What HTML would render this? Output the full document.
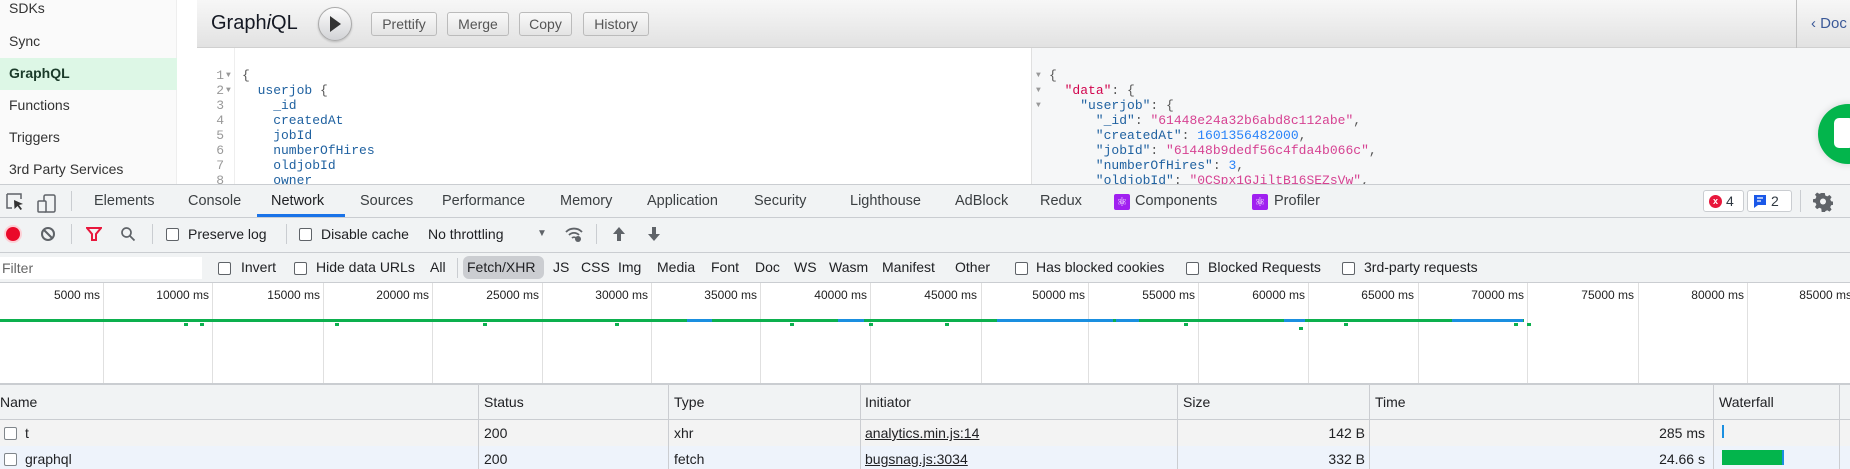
<!DOCTYPE html>
<html><head><meta charset="utf-8"><style>
*{box-sizing:border-box;margin:0;padding:0}
body{width:1850px;height:469px;overflow:hidden;position:relative;background:#fff;font-family:"Liberation Sans","DejaVu Sans",sans-serif;color:#303942}
.a{position:absolute;white-space:nowrap}
.sb{font-size:14px;color:#333;left:9px}
.mono{font-family:"Liberation Mono","DejaVu Sans Mono",monospace;font-size:13px}
.btn{position:absolute;top:12px;height:24px;border:1px solid #bbb;border-radius:3px;background:linear-gradient(#f9f9f9,#e4e4e4);font-size:14px;color:#555;text-align:center;line-height:22px}
.tab{position:absolute;top:193px;font-size:14.5px;color:#3c4043}
.t2{font-size:14px;color:#202124;top:259px}
.cb{position:absolute;width:13px;height:13px;border:1px solid #5f6368;border-radius:2px;background:#fff}
.lbl{position:absolute;top:288px;font-size:12px;color:#222;text-align:right;width:100px}
.gl{position:absolute;top:283px;width:1px;height:101px;background:#e0e0e0}
.sq{position:absolute;width:4px;height:3px;background:#0cb04e}
.col{position:absolute;top:384px;width:1px;height:85px;background:#cbcdd1}
.th{position:absolute;top:394px;font-size:14px;color:#202124}
.td{position:absolute;font-size:14px;color:#202124}
</style></head><body>
<div class="a" style="left:0;top:0;width:177px;height:184px;background:#fafafa;border-right:1px solid #eee"></div>
<div class="a" style="left:0;top:58px;width:177px;height:32px;background:#ddf7e6"></div>
<div class="a sb" style="top:0px">SDKs</div>
<div class="a sb" style="top:33px">Sync</div>
<div class="a sb" style="top:65px;font-weight:bold;color:#1b3b2a">GraphQL</div>
<div class="a sb" style="top:97px">Functions</div>
<div class="a sb" style="top:129px">Triggers</div>
<div class="a sb" style="top:161px">3rd Party Services</div>
<div class="a" style="left:197px;top:0;width:1653px;height:48px;background:linear-gradient(#f7f7f7,#e2e2e2);border-bottom:1px solid #d0d0d0"></div>
<div class="a" style="left:211px;top:12px;font-size:20px;color:#141823">Graph<i>i</i>QL</div>
<div class="a" style="left:318px;top:7px;width:34px;height:34px;border-radius:50%;border:1px solid #aaa;background:linear-gradient(#fdfdfd,#d2d3d6);box-shadow:0 1px 2px rgba(0,0,0,.2)"></div>
<svg class="a" style="left:330px;top:16px" width="12" height="16"><path d="M0 0L11 8L0 16Z" fill="#333"/></svg>
<div class="btn" style="left:371px;width:66px">Prettify</div>
<div class="btn" style="left:447px;width:62px">Merge</div>
<div class="btn" style="left:519px;width:53px">Copy</div>
<div class="btn" style="left:583px;width:66px">History</div>
<div class="a" style="left:1796px;top:0;width:1px;height:48px;background:#c0c0c0"></div>
<div class="a" style="left:1811px;top:15px;font-size:15px;color:#3b5998">&#x2039; Doc</div>
<div class="a" style="left:234px;top:48px;width:1px;height:136px;background:#eee"></div>
<div class="a" style="left:1031px;top:48px;width:819px;height:136px;background:#f6f7f8;border-left:1px solid #e0e0e0"></div>
<div class="a mono" style="left:200px;top:68px;line-height:15px;color:#999;text-align:right;width:24px">1<br>2<br>3<br>4<br>5<br>6<br>7<br>8</div>
<div class="a mono" style="left:226px;top:68px;line-height:15px;color:#999;font-size:8px">▼<br>▼</div>
<div class="a mono" style="left:242px;top:68px;line-height:15px;color:#1f61a0;white-space:pre"><span style="color:#555">{</span>
  userjob <span style="color:#555">{</span>
    _id
    createdAt
    jobId
    numberOfHires
    oldjobId
    owner</div>
<div class="a mono" style="left:1036px;top:68px;line-height:15px;color:#999;font-size:8px">▼<br>▼<br>▼</div>
<div class="a mono" style="left:1049px;top:68px;line-height:15px;color:#1f61a0;white-space:pre;height:116px;overflow:hidden"><span style="color:#555">{</span>
  <span style="color:#d2054e">"data"</span><span style="color:#555">: {</span>
    "userjob"<span style="color:#555">: {</span>
      "_id"<span style="color:#555">: </span><span style="color:#d64292">"61448e24a32b6abd8c112abe"</span><span style="color:#555">,</span>
      "createdAt"<span style="color:#555">: </span><span style="color:#2882f9">1601356482000</span><span style="color:#555">,</span>
      "jobId"<span style="color:#555">: </span><span style="color:#d64292">"61448b9dedf56c4fda4b066c"</span><span style="color:#555">,</span>
      "numberOfHires"<span style="color:#555">: </span><span style="color:#2882f9">3</span><span style="color:#555">,</span>
      "oldjobId"<span style="color:#555">: </span><span style="color:#d64292">"0CSpx1GJiltB16SEZsVw"</span><span style="color:#555">,</span></div>
<div class="a" style="left:1818px;top:104px;width:60px;height:60px;border-radius:50%;background:#03b54c;box-shadow:0 0 8px rgba(0,0,0,.15)"></div>
<div class="a" style="left:1834px;top:118px;width:20px;height:30px;border-radius:5px;background:#fff"></div>
<div class="a" style="left:0;top:184px;width:1850px;height:285px;background:#f1f3f4;border-top:1px solid #cacdd1"></div>
<div class="a" style="left:0;top:217px;width:1850px;height:1px;background:#cacdd1"></div>
<div class="a" style="left:0;top:252px;width:1850px;height:1px;background:#cacdd1"></div>
<div class="a" style="left:0;top:282px;width:1850px;height:1px;background:#cacdd1"></div>
<svg class="a" style="left:5px;top:192px" width="56" height="22"><path d="M2 2h14v5M2 2v14h5" fill="none" stroke="#5f6368" stroke-width="1.5"/><path d="M9 8l9 4-4 1 3 4-1.5 1-3-4-3 3z" fill="#333"/><rect x="39" y="3" width="11" height="17" rx="1.5" fill="none" stroke="#5f6368" stroke-width="1.5"/><rect x="33" y="9" width="8" height="11" rx="1" fill="#f1f3f4" stroke="#5f6368" stroke-width="1.5"/></svg>
<div class="a" style="left:71px;top:191px;width:1px;height:20px;background:#cacdd1"></div>
<div class="tab" style="left:94px">Elements</div>
<div class="tab" style="left:188px">Console</div>
<div class="tab" style="left:271px;color:#202124">Network</div>
<div class="a" style="left:257px;top:214px;width:88px;height:3px;background:#1a73e8"></div>
<div class="tab" style="left:360px">Sources</div>
<div class="tab" style="left:442px">Performance</div>
<div class="tab" style="left:560px">Memory</div>
<div class="tab" style="left:647px">Application</div>
<div class="tab" style="left:754px">Security</div>
<div class="tab" style="left:850px">Lighthouse</div>
<div class="tab" style="left:955px">AdBlock</div>
<div class="tab" style="left:1040px">Redux</div>
<div class="a" style="left:1114px;top:194px;width:16px;height:16px;background:#a020f0;border-radius:2px;color:#fff;font-size:12px;text-align:center;line-height:16px">⚛</div>
<div class="tab" style="left:1135px">Components</div>
<div class="a" style="left:1252px;top:194px;width:16px;height:16px;background:#a020f0;border-radius:2px;color:#fff;font-size:12px;text-align:center;line-height:16px">⚛</div>
<div class="tab" style="left:1274px">Profiler</div>
<div class="a" style="left:1703px;top:190px;width:41px;height:22px;border:1px solid #cacdd1;border-radius:3px;background:#fff"></div>
<div class="a" style="left:1709px;top:195px;width:13px;height:13px;border-radius:50%;background:#e8173c;color:#fff;font-size:9px;text-align:center;line-height:13px;font-weight:bold">x</div>
<div class="a" style="left:1726px;top:193px;font-size:14px">4</div>
<div class="a" style="left:1747px;top:190px;width:45px;height:22px;border:1px solid #cacdd1;border-radius:3px;background:#fff"></div>
<svg class="a" style="left:1753px;top:194px" width="14" height="15"><path d="M1 1h12v10H5l-4 3z" fill="#1a58e8"/><path d="M4 4h6M4 7h4" stroke="#fff" stroke-width="1.3"/></svg>
<div class="a" style="left:1771px;top:193px;font-size:14px">2</div>
<div class="a" style="left:1800px;top:190px;width:1px;height:22px;background:#cacdd1"></div>
<svg class="a" style="left:1813px;top:192px" width="20" height="20" viewBox="0 0 20 20"><path d="M8.5 1h3l.5 2.5 2 .9 2.2-1.4 2.1 2.1-1.4 2.2.9 2 2.5.5v3l-2.5.5-.9 2 1.4 2.2-2.1 2.1-2.2-1.4-2 .9-.5 2.5h-3L8 16.6l-2-.9-2.2 1.4-2.1-2.1L3.1 12.8l-.9-2L-.3 10.3v-3l2.5-.5.9-2L1.7 2.6 3.8.5 6 1.9l2-.9z" fill="#5f6368" transform="translate(.3 0)"/><circle cx="10" cy="9.5" r="3" fill="#f1f3f4"/></svg>
<div class="a" style="left:6px;top:227px;width:14px;height:14px;border-radius:50%;background:#ea0a2a;box-shadow:0 0 0 2px #fcd0d6"></div>
<svg class="a" style="left:40px;top:226px" width="16" height="16"><circle cx="8" cy="8" r="6" fill="none" stroke="#5f6368" stroke-width="2"/><path d="M4 4l8 8" stroke="#5f6368" stroke-width="2"/></svg>
<div class="a" style="left:71px;top:224px;width:1px;height:20px;background:#cacdd1"></div>
<svg class="a" style="left:86px;top:226px" width="16" height="16"><path d="M1 2h14L10 8v6H6V8z" fill="none" stroke="#e8173c" stroke-width="2"/></svg>
<svg class="a" style="left:120px;top:226px" width="16" height="16"><circle cx="6.5" cy="6.5" r="4.5" fill="none" stroke="#5f6368" stroke-width="1.7"/><path d="M10 10l4.5 4.5" stroke="#5f6368" stroke-width="1.8"/></svg>
<div class="a" style="left:152px;top:224px;width:1px;height:20px;background:#cacdd1"></div>
<div class="cb" style="left:166px;top:228px"></div>
<div class="a t2" style="left:188px;top:226px">Preserve log</div>
<div class="a" style="left:286px;top:224px;width:1px;height:20px;background:#cacdd1"></div>
<div class="cb" style="left:299px;top:228px"></div>
<div class="a t2" style="left:321px;top:226px">Disable cache</div>
<div class="a t2" style="left:428px;top:226px">No throttling</div>
<div class="a" style="left:537px;top:228px;font-size:10px;color:#5f6368">▼</div>
<svg class="a" style="left:564px;top:225px" width="20" height="18"><path d="M2 7a11 11 0 0 1 16 0M5 10a7 7 0 0 1 10 0M8 13a3 3 0 0 1 4 0" fill="none" stroke="#5f6368" stroke-width="1.8"/><circle cx="14" cy="14" r="3" fill="#5f6368"/></svg>
<div class="a" style="left:596px;top:224px;width:1px;height:20px;background:#cacdd1"></div>
<svg class="a" style="left:612px;top:226px" width="14" height="16"><path d="M7 1L1 8h4v7h4V8h4z" fill="#5f6368"/></svg>
<svg class="a" style="left:647px;top:226px" width="14" height="16"><path d="M7 15L1 8h4V1h4v7h4z" fill="#5f6368"/></svg>
<div class="a" style="left:0;top:257px;width:202px;height:22px;background:#fff"></div>
<div class="a t2" style="left:2px;top:260px;color:#666">Filter</div>
<div class="cb" style="left:218px;top:262px"></div><div class="a t2" style="left:241px">Invert</div>
<div class="cb" style="left:294px;top:262px"></div><div class="a t2" style="left:316px">Hide data URLs</div>
<div class="a t2" style="left:430px">All</div>
<div class="a" style="left:457px;top:258px;width:1px;height:20px;background:#cacdd1"></div>
<div class="a" style="left:463px;top:256px;width:81px;height:23px;border-radius:6px;background:#cbcdd1"></div>
<div class="a t2" style="left:467px">Fetch/XHR</div>
<div class="a t2" style="left:553px">JS</div>
<div class="a t2" style="left:581px">CSS</div>
<div class="a t2" style="left:618px">Img</div>
<div class="a t2" style="left:657px">Media</div>
<div class="a t2" style="left:711px">Font</div>
<div class="a t2" style="left:755px">Doc</div>
<div class="a t2" style="left:794px">WS</div>
<div class="a t2" style="left:829px">Wasm</div>
<div class="a t2" style="left:882px">Manifest</div>
<div class="a t2" style="left:955px">Other</div>
<div class="cb" style="left:1015px;top:262px"></div><div class="a t2" style="left:1036px">Has blocked cookies</div>
<div class="cb" style="left:1186px;top:262px"></div><div class="a t2" style="left:1208px">Blocked Requests</div>
<div class="cb" style="left:1342px;top:262px"></div><div class="a t2" style="left:1364px">3rd-party requests</div>
<div class="a" style="left:0;top:283px;width:1850px;height:101px;background:#fff"></div>
<div class="gl" style="left:103px"></div><div class="gl" style="left:212px"></div><div class="gl" style="left:323px"></div><div class="gl" style="left:432px"></div><div class="gl" style="left:542px"></div><div class="gl" style="left:651px"></div><div class="gl" style="left:760px"></div><div class="gl" style="left:870px"></div><div class="gl" style="left:981px"></div><div class="gl" style="left:1088px"></div><div class="gl" style="left:1198px"></div><div class="gl" style="left:1308px"></div><div class="gl" style="left:1418px"></div><div class="gl" style="left:1527px"></div><div class="gl" style="left:1638px"></div><div class="gl" style="left:1747px"></div>
<div class="lbl" style="left:0">5000 ms</div><div class="lbl" style="left:109px">10000 ms</div><div class="lbl" style="left:220px">15000 ms</div><div class="lbl" style="left:329px">20000 ms</div><div class="lbl" style="left:439px">25000 ms</div><div class="lbl" style="left:548px">30000 ms</div><div class="lbl" style="left:657px">35000 ms</div><div class="lbl" style="left:767px">40000 ms</div><div class="lbl" style="left:877px">45000 ms</div><div class="lbl" style="left:985px">50000 ms</div><div class="lbl" style="left:1095px">55000 ms</div><div class="lbl" style="left:1205px">60000 ms</div><div class="lbl" style="left:1314px">65000 ms</div><div class="lbl" style="left:1424px">70000 ms</div><div class="lbl" style="left:1534px">75000 ms</div><div class="lbl" style="left:1644px">80000 ms</div><div class="lbl" style="left:1752px">85000 ms</div>
<div class="a" style="left:0;top:319px;width:1524px;height:3px;background:#0cb04e"></div>
<div class="a" style="left:687px;top:319px;width:25px;height:3px;background:#1a8fe0"></div>
<div class="a" style="left:838px;top:319px;width:26px;height:3px;background:#1a8fe0"></div>
<div class="a" style="left:997px;top:319px;width:116px;height:3px;background:#1a8fe0"></div>
<div class="a" style="left:1116px;top:319px;width:23px;height:3px;background:#1a8fe0"></div>
<div class="a" style="left:1284px;top:319px;width:21px;height:3px;background:#1a8fe0"></div>
<div class="a" style="left:1452px;top:319px;width:71px;height:3px;background:#1a8fe0"></div>
<div class="sq" style="left:184px;top:323px"></div><div class="sq" style="left:200px;top:323px"></div><div class="sq" style="left:335px;top:323px"></div><div class="sq" style="left:483px;top:323px"></div><div class="sq" style="left:615px;top:323px"></div><div class="sq" style="left:790px;top:323px"></div><div class="sq" style="left:869px;top:323px"></div><div class="sq" style="left:945px;top:323px"></div><div class="sq" style="left:1184px;top:323px"></div><div class="sq" style="left:1299px;top:327px"></div><div class="sq" style="left:1344px;top:323px"></div><div class="sq" style="left:1514px;top:323px"></div><div class="sq" style="left:1527px;top:323px"></div>
<div class="a" style="left:0;top:383px;width:1850px;height:2px;background:#cacdd1"></div>
<div class="a" style="left:0;top:419px;width:1850px;height:1px;background:#cacdd1"></div>
<div class="a" style="left:0;top:420px;width:1850px;height:26px;background:#f3f3f3"></div>
<div class="a" style="left:0;top:446px;width:1850px;height:23px;background:#eef3fb"></div>
<div class="col" style="left:478px"></div><div class="col" style="left:668px"></div><div class="col" style="left:860px"></div><div class="col" style="left:1177px"></div><div class="col" style="left:1369px"></div><div class="col" style="left:1713px"></div><div class="col" style="left:1839px"></div>
<div class="th" style="left:0">Name</div><div class="th" style="left:484px">Status</div><div class="th" style="left:674px">Type</div><div class="th" style="left:865px">Initiator</div><div class="th" style="left:1183px">Size</div><div class="th" style="left:1375px">Time</div><div class="th" style="left:1719px">Waterfall</div>
<div class="cb" style="left:4px;top:427px;border-color:#80868b"></div><div class="td" style="left:25px;top:425px">t</div>
<div class="td" style="left:484px;top:425px">200</div><div class="td" style="left:674px;top:425px">xhr</div><div class="td" style="left:865px;top:425px;text-decoration:underline">analytics.min.js:14</div>
<div class="td" style="left:1177px;top:425px;width:194px;text-align:right;padding-right:6px">142 B</div><div class="td" style="left:1369px;top:425px;width:336px;text-align:right">285 ms</div>
<div class="a" style="left:1722px;top:425px;width:2px;height:13px;background:#1a8fe0"></div>
<div class="cb" style="left:4px;top:453px;border-color:#80868b"></div><div class="td" style="left:25px;top:451px">graphql</div>
<div class="td" style="left:484px;top:451px">200</div><div class="td" style="left:674px;top:451px">fetch</div><div class="td" style="left:865px;top:451px;text-decoration:underline">bugsnag.js:3034</div>
<div class="td" style="left:1177px;top:451px;width:194px;text-align:right;padding-right:6px">332 B</div><div class="td" style="left:1369px;top:451px;width:336px;text-align:right">24.66 s</div>
<div class="a" style="left:1722px;top:450px;width:62px;height:15px;background:#03b54c;border-right:2px solid #1a8fe0"></div>
</body></html>
